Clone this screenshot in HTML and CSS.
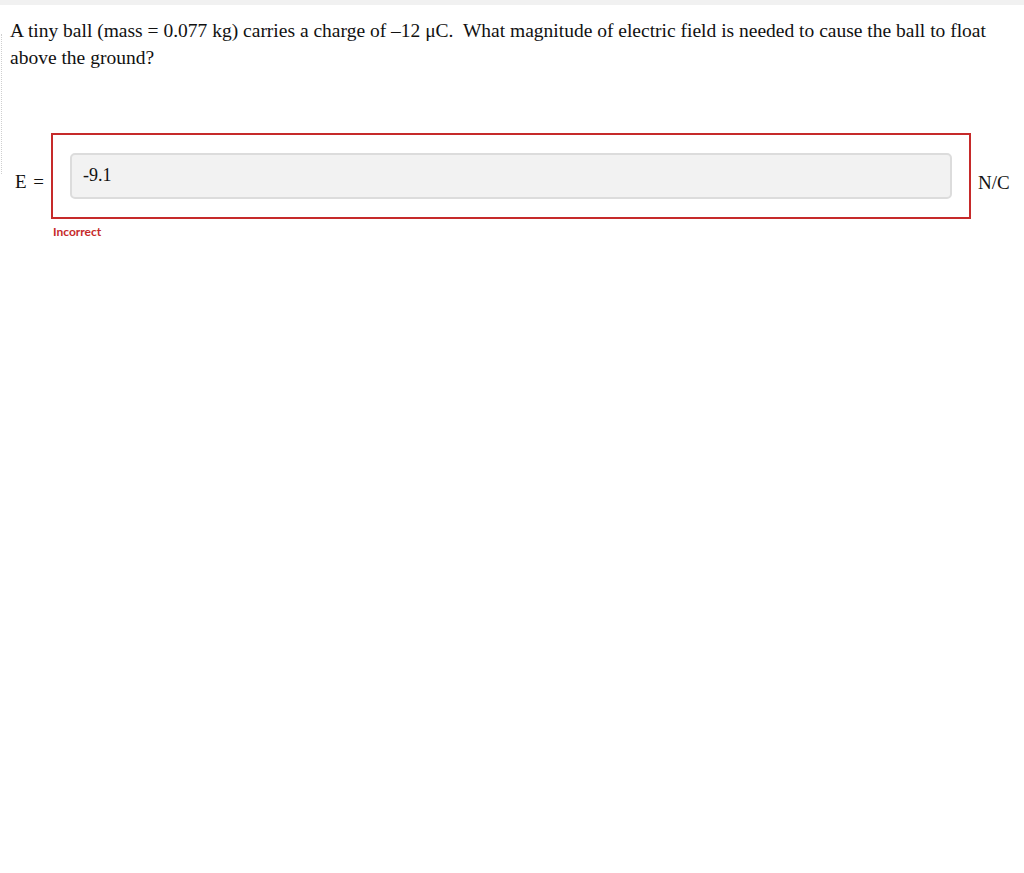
FILE: index.html
```html
<!DOCTYPE html>
<html lang="en">
<head>
    <meta charset="UTF-8">
    <title>Question</title>
    <link rel="stylesheet" href="styles.css">
</head>
<body>

    <!-- top strip -->
    <div class="topbar"></div>

    <!-- dotted edge on the left -->
    <div class="side-edge"></div>

    <!-- Question -->
    <div class="question">
        <p>A tiny ball (mass = 0.077 kg) carries a charge of &ndash;12 &mu;C.&nbsp; What magnitude of electric field is needed to cause the ball to float above the ground?</p>
    </div>

    <!-- Answer -->
    <div class="answer">
        <div class="answer-row">
            <span class="label">E =</span>
            <div class="input-box incorrect">
                <input type="text" value="-9.1">
            </div>
            <span class="unit">N/C</span>
        </div>
        <div class="feedback">Incorrect</div>
    </div>

</body>
</html>
```

FILE: styles.css
```css
/* General */
body {
    margin: 0;
    background: #ffffff;
    font-family: "Liberation Serif", "Times New Roman", serif;
    color: #111;
    position: relative;
    overflow: hidden;
}

.topbar {
    height: 5px;
    background: #f1f1f1;
}

.side-edge {
    position: absolute;
    left: 1px;
    top: 34px;
    width: 0;
    height: 140px;
    border-left: 1px dotted #cfcfcf;
}

/* Question */
.question {
    padding: 0 28px 0 10px;
}

.question p {
    margin: 12px 0 0;
    font-size: 19.5px;
    line-height: 27px;
}

/* Answer */
.answer {
    margin-top: 62px;
    padding-left: 15px;
}

.answer-row {
    display: flex;
    align-items: center;
}

.label {
    font-size: 19px;
    padding-top: 12px;
    width: 36px;
    word-spacing: 2px;
}

.unit {
    font-size: 19px;
    padding-top: 14px;
    margin-left: 7px;
}

.input-box {
    width: 882px;
    padding: 18px 17px;
    border: 2px solid #c62a2a;
}

.input-box input {
    display: block;
    width: 100%;
    box-sizing: border-box;
    height: 46px;
    padding: 0 11px 2px;
    border: 2px solid #dcdcdc;
    border-radius: 5px;
    background: #f2f2f2;
    font-family: "Liberation Serif", "Times New Roman", serif;
    font-size: 18px;
    color: #111;
    outline: none;
}

.feedback {
    margin: 5px 0 0 38px;
    font-family: Lato, "Liberation Sans", sans-serif;
    font-weight: bold;
    font-size: 12px;
    color: #c62a2a;
}
```
